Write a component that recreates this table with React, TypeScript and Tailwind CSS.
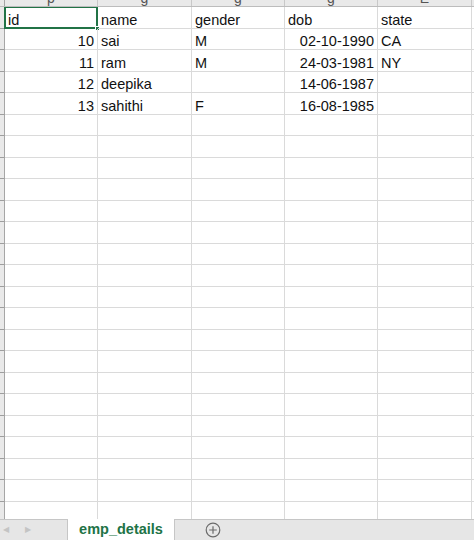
import React from "react";

const cols = ["w-[93px]", "w-[94px]", "w-[93px]", "w-[93px]", "w-[94px]"];

type Cell = { v: string; right?: boolean };

const data: Cell[][] = [
  [{ v: "id" }, { v: "name" }, { v: "gender" }, { v: "dob" }, { v: "state" }],
  [{ v: "10", right: true }, { v: "sai" }, { v: "M" }, { v: "02-10-1990", right: true }, { v: "CA" }],
  [{ v: "11", right: true }, { v: "ram" }, { v: "M" }, { v: "24-03-1981", right: true }, { v: "NY" }],
  [{ v: "12", right: true }, { v: "deepika" }, { v: "" }, { v: "14-06-1987", right: true }, { v: "" }],
  [{ v: "13", right: true }, { v: "sahithi" }, { v: "F" }, { v: "16-08-1985", right: true }, { v: "" }],
];

const headerMarks = ["p", "g", "g", "g", "E"];

export default function App() {
  const rows = Array.from({ length: 24 }, (_, i) => data[i] ?? null);

  return (
    <div
      className="w-[474px] h-[540px] flex flex-col overflow-hidden bg-white text-[#111]"
      style={{ fontFamily: '"Liberation Sans", Arial, sans-serif' }}
    >
      {/* Column header band (cut off at the top) */}
      <div className="flex h-[7px] shrink-0 bg-[#e9e9e9] border-b border-[#bcbcbc]">
        <div className="w-[5px] shrink-0 border-r border-[#a6a6a6]" />
        {cols.map((w, i) => (
          <div
            key={i}
            className={`${w} shrink-0 overflow-hidden border-r border-[#c8c8c8] flex justify-center`}
          >
            <span className="text-[14px] leading-[14px] -mt-[9px] text-[#555]">{headerMarks[i]}</span>
          </div>
        ))}
        <div className="flex-1" />
      </div>

      {/* Grid */}
      <div className="flex-1 overflow-hidden">
        {rows.map((row, r) => (
          <div key={r} className="flex h-[21.5px]">
            <div className="w-[5px] shrink-0 bg-[#e9e9e9] border-r border-[#a6a6a6] border-b border-b-[#9e9e9e]" />
            {cols.map((w, c) => {
              const cell = row?.[c];
              const selected = r === 0 && c === 0;
              return (
                <div
                  key={c}
                  className={`${w} shrink-0 relative flex items-end border-r border-b border-[#dadada] px-[3px] text-[14.5px] leading-[16px] whitespace-nowrap ${
                    cell?.right ? "justify-end" : "justify-start"
                  }`}
                >
                  <span>{cell?.v}</span>
                  {selected && (
                    <>
                      <div className="absolute -left-[1px] -top-[1px] -right-[1px] -bottom-[1px] border-2 border-[#217346]" />
                      <div className="absolute -right-[3px] -bottom-[3px] w-[5px] h-[5px] bg-[#217346] border border-white" />
                    </>
                  )}
                </div>
              );
            })}
            <div className="flex-1 border-b border-[#dadada]" />
          </div>
        ))}
      </div>

      {/* Sheet tab bar */}
      <div className="flex h-[21px] shrink-0 bg-[#e6e6e6] border-t border-[#c6c6c6]">
        <div className="w-[68px] shrink-0 flex items-center gap-[16px] pl-[3px] border-r border-[#c6c6c6] text-[#c4c4c4] text-[8px]">
          <span>◀</span>
          <span>▶</span>
        </div>
        <div className="w-[107px] shrink-0 -mt-[1px] bg-white border-r border-[#c6c6c6] flex items-center justify-center text-[14.5px] font-bold text-[#217346]">
          emp_details
        </div>
        <div className="flex-1 flex items-center pl-[30px]">
          <svg width="16" height="16" viewBox="0 0 16 16" fill="none" stroke="#6b6b6b" strokeWidth="1.2">
            <circle cx="8" cy="8" r="6.8" />
            <path d="M8 4.2v7.6M4.2 8h7.6" />
          </svg>
        </div>
      </div>
    </div>
  );
}
